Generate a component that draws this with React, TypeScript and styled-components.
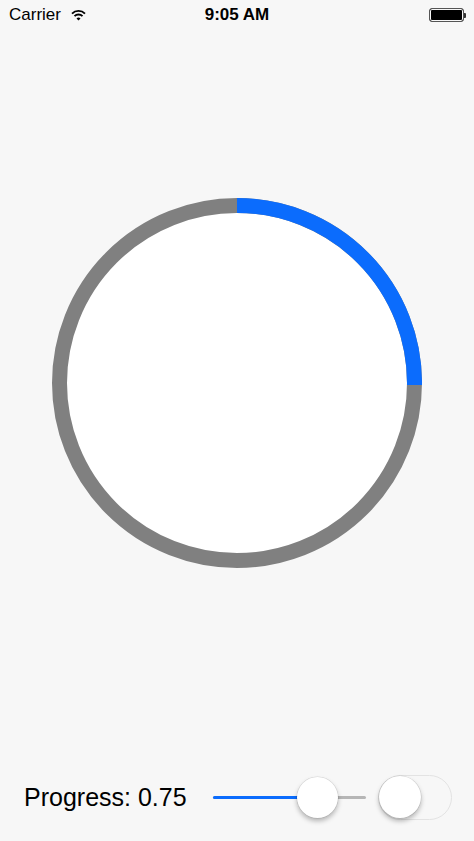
import styled, { createGlobalStyle } from 'styled-components';

const GlobalStyle = createGlobalStyle`
  html, body {
    margin: 0;
    padding: 0;
    background: #f7f7f7;
  }
  * {
    box-sizing: border-box;
  }
`;

const PROGRESS = 0.75;
// ring fill shown in the screenshot: a quarter, top → 3 o'clock
const RING_SIZE = 370;
const RING_STROKE = 15;

export default function App() {
  const r = (RING_SIZE - RING_STROKE) / 2;
  const c = RING_SIZE / 2;

  return (
    <Screen>
      <GlobalStyle />
      <StatusBar>
        <Carrier>
          Carrier
          <WifiIcon width="15" height="12" viewBox="0 0 15 12">
            <path d="M1 4.6 A9.2 9.2 0 0 1 14 4.6" fill="none" stroke="#000" strokeWidth="1.9" />
            <path d="M3.5 7.1 A5.7 5.7 0 0 1 11.5 7.1" fill="none" stroke="#000" strokeWidth="1.9" />
            <path d="M7.5 11.6 L5.5 9.4 A2.9 2.9 0 0 1 9.5 9.4 Z" fill="#000" />
          </WifiIcon>
        </Carrier>
        <Clock>9:05 AM</Clock>
        <Battery>
          <BatteryBody />
          <BatteryNub />
        </Battery>
      </StatusBar>

      <Stage>
        <Ring width={RING_SIZE} height={RING_SIZE} viewBox={`0 0 ${RING_SIZE} ${RING_SIZE}`}>
          <circle cx={c} cy={c} r={r} fill="#fff" stroke="#808080" strokeWidth={RING_STROKE} />
          <path
            d={`M ${c} ${RING_STROKE / 2} A ${r} ${r} 0 0 1 ${RING_SIZE - RING_STROKE / 2} ${c + 2}`}
            fill="none"
            stroke="#0b6cfd"
            strokeWidth={RING_STROKE}
          />
        </Ring>
      </Stage>

      <Controls>
        <Label>Progress: {PROGRESS.toFixed(2)}</Label>
        <Slider>
          <Track />
          <TrackFill style={{ width: `calc(20px + (100% - 41px) * ${PROGRESS})` }} />
          <Thumb style={{ left: `calc((100% - 41px) * ${PROGRESS})` }} />
        </Slider>
        <Switch>
          <Knob />
        </Switch>
      </Controls>
    </Screen>
  );
}

const Screen = styled.div`
  display: flex;
  flex-direction: column;
  height: 100vh;
  background: #f7f7f7;
  font-family: 'Liberation Sans', Arial, sans-serif;
  color: #000;
`;

const StatusBar = styled.div`
  position: relative;
  display: flex;
  align-items: center;
  justify-content: space-between;
  height: 30px;
  padding: 0 8px 0 9px;
  font-size: 17px;
`;

const Carrier = styled.div`
  display: flex;
  align-items: center;
  gap: 10px;
`;

const WifiIcon = styled.svg`
  display: block;
  margin-top: -1px;
`;

// 시계는 상태바 정중앙 — 좌우 폭이 달라 absolute로 띄움
const Clock = styled.div`
  position: absolute;
  left: 0;
  right: 0;
  text-align: center;
  font-weight: bold;
  pointer-events: none;
`;

const Battery = styled.div`
  display: flex;
  align-items: center;
`;

const BatteryBody = styled.div`
  width: 35px;
  height: 14px;
  border: 1px solid #555;
  border-radius: 3px;
  background: #000;
  box-shadow: inset 0 0 0 1px #f7f7f7;
`;

const BatteryNub = styled.div`
  width: 2px;
  height: 5px;
  background: #333;
  border-radius: 0 1px 1px 0;
`;

const Stage = styled.div`
  flex: 1;
  display: flex;
  align-items: center;
  justify-content: center;
  padding-bottom: 38px;
`;

const Ring = styled.svg`
  display: block;
`;

const Controls = styled.div`
  display: flex;
  align-items: center;
  gap: 12px;
  height: 46px;
  margin-bottom: 21px;
  padding: 0 22px 0 24px;
`;

const Label = styled.div`
  flex: 1;
  font-size: 25px;
  line-height: 1;
  white-space: nowrap;
`;

const Slider = styled.div`
  position: relative;
  width: 153px;
  height: 43px;
`;

const Track = styled.div`
  position: absolute;
  left: 0;
  right: 0;
  top: 20px;
  height: 3px;
  border-radius: 2px;
  background: #b6b6b6;
`;

const TrackFill = styled.div`
  position: absolute;
  left: 0;
  top: 20px;
  height: 3px;
  border-radius: 2px;
  background: #0b6cfd;
`;

const Thumb = styled.div`
  position: absolute;
  top: 1px;
  width: 41px;
  height: 41px;
  border-radius: 50%;
  background: #fff;
  box-shadow: 0 3px 5px rgba(0, 0, 0, 0.28), 0 0 0 0.5px rgba(0, 0, 0, 0.12);
`;

const Switch = styled.div`
  width: 74px;
  height: 45px;
  padding: 1px;
  border-radius: 23px;
  border: 1.5px solid #e3e3e3;
  background: #f7f7f7;
  display: flex;
  align-items: center;
`;

const Knob = styled.div`
  width: 42px;
  height: 42px;
  margin-left: -1px;
  border-radius: 50%;
  background: #fff;
  box-shadow: 0 3px 5px rgba(0, 0, 0, 0.28), 0 0 0 0.5px rgba(0, 0, 0, 0.12);
`;
